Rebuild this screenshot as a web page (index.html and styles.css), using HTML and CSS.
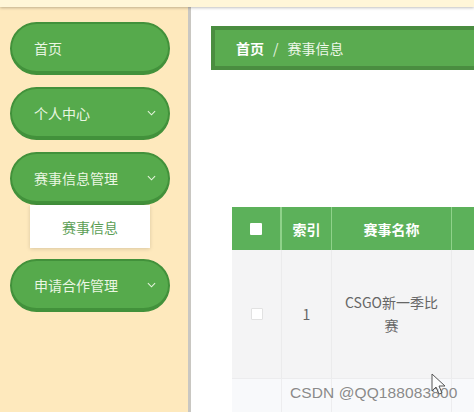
FILE: index.html
```html
<!DOCTYPE html>
<html lang="zh">
<head>
<meta charset="utf-8">
<link rel="stylesheet" href="styles.css">
</head>
<body>
<div class="topbar"></div>
<div class="layout">
  <aside class="sidebar">
    <div class="menu-item"><span>首页</span></div>
    <div class="menu-item"><span>个人中心</span><svg class="chev" viewBox="0 0 10 6"><path d="M1 1l4 4 4-4" fill="none" stroke="#e6f4de" stroke-width="1.2"/></svg></div>
    <div class="menu-item"><span>赛事信息管理</span><svg class="chev" viewBox="0 0 10 6"><path d="M1 1l4 4 4-4" fill="none" stroke="#e6f4de" stroke-width="1.2"/></svg></div>
    <div class="submenu">赛事信息</div>
    <div class="menu-item"><span>申请合作管理</span><svg class="chev" viewBox="0 0 10 6"><path d="M1 1l4 4 4-4" fill="none" stroke="#e6f4de" stroke-width="1.2"/></svg></div>
  </aside>
  <main class="main">
    <div class="breadcrumb"><b>首页</b><span class="sep">/</span><span>赛事信息</span></div>
    <div class="table">
      <div class="row head">
        <div class="cell c1"><span class="box"></span></div>
        <div class="cell c2">索引</div>
        <div class="cell c3">赛事名称</div>
        <div class="cell c4"></div>
      </div>
      <div class="row body">
        <div class="cell c1"><span class="box small"></span></div>
        <div class="cell c2">1</div>
        <div class="cell c3">CSGO新一季比<br>赛</div>
        <div class="cell c4"></div>
      </div>
      <div class="row body2">
        <div class="cell c1"></div>
        <div class="cell c2"></div>
        <div class="cell c3"></div>
        <div class="cell c4"></div>
      </div>
    </div>
  </main>
</div>
<div class="watermark">CSDN @QQ188083800</div>
<svg class="cursor" viewBox="0 0 14 22"><path d="M1 1v17l4-4 3 7 3-1-3-7h6z" fill="#fff" fill-opacity="0.6" stroke="#555" stroke-width="1"/></svg>
</body>
</html>
```
FILE: styles.css
```css
html, body { margin: 0; padding: 0; }
body {
  width: 474px; height: 412px; overflow: hidden; position: relative;
  font-family: "Noto Sans CJK SC", "Liberation Sans", sans-serif;
  background: #fff;
}
.topbar {
  height: 7px; background: #fff6d8;
  box-shadow: 0 1px 3px rgba(0,0,0,0.25);
  position: relative; z-index: 2;
}
.layout { display: flex; height: 405px; }
.sidebar {
  width: 191px; flex: none; background: #fee9bd;
  border-right: 3px solid #c9c7c2;
  padding: 15px 0 0 10px; box-sizing: border-box;
  display: flex; flex-direction: column;
}
.menu-item {
  width: 160px; height: 53px; box-sizing: border-box;
  background: #56aa4c;
  border: 2px solid #42913b; border-bottom-width: 4px;
  border-radius: 27px;
  display: flex; align-items: center; justify-content: space-between;
  padding: 0 12px 0 22px;
  color: #eaf6e2; font-size: 14px;
  margin-bottom: 12px;
}
.menu-item:nth-child(3) { margin-bottom: 0; }
.chev { width: 9px; height: 6px; }
.submenu {
  margin: 0 0 11px 20px; width: 120px; height: 43px;
  background: #fff; color: #5b9e55; font-size: 14px;
  display: flex; align-items: center; justify-content: center;
  box-shadow: 0 1px 4px rgba(0,0,0,0.15);
}
.main { flex: 1; overflow: hidden; padding: 19px 0 0 20px; }
.breadcrumb {
  height: 44px; box-sizing: border-box; width: 300px;
  background: #5aab50; border: 4px solid #4a8d40; border-right: none;
  color: #fff; font-size: 14px;
  display: flex; align-items: center; padding-left: 21px;
}
.breadcrumb b { font-weight: 700; }
.breadcrumb .sep { margin: 0 9px; color: #e6f3e0; }
.breadcrumb span:last-child { color: #eef8ea; }
.table { margin: 137px 0 0 21px; width: 300px; }
.row { display: flex; }
.cell {
  flex: none; box-sizing: border-box;
  display: flex; align-items: center; justify-content: center;
  text-align: center; font-size: 14px;
}
.c1 { width: 50px; } .c2 { width: 50px; } .c3 { width: 120px; } .c4 { width: 80px; }
.head { height: 43px; background: #5cb15a; }
.head .cell { color: #fff; font-weight: 700; border-right: 1px solid #8fd28a; }
.head .c1 { border-right-width: 2px; }
.box { width: 12px; height: 12px; background: #fff; border-radius: 1px; }
.box.small { width: 12px; height: 12px; border: 1px solid #e2e2e2; box-sizing: border-box; }
.body { height: 128px; background: #f4f4f5; }
.body .cell { color: #666; border-right: 1px solid #ebebec; line-height: 23px; }
.body2 { height: 40px; background: #f8f9fb; border-top: 1px solid #ececee; }
.body2 .cell { border-right: 1px solid #ededef; }
.watermark {
  position: absolute; left: 290px; top: 384px;
  font-family: "Liberation Sans", sans-serif; font-size: 15.5px;
  color: #8a8a8a; letter-spacing: 0.1px;
  text-shadow: 0 0 2px #fff;
}
.cursor { position: absolute; left: 431px; top: 373px; width: 14px; height: 22px; }
```
